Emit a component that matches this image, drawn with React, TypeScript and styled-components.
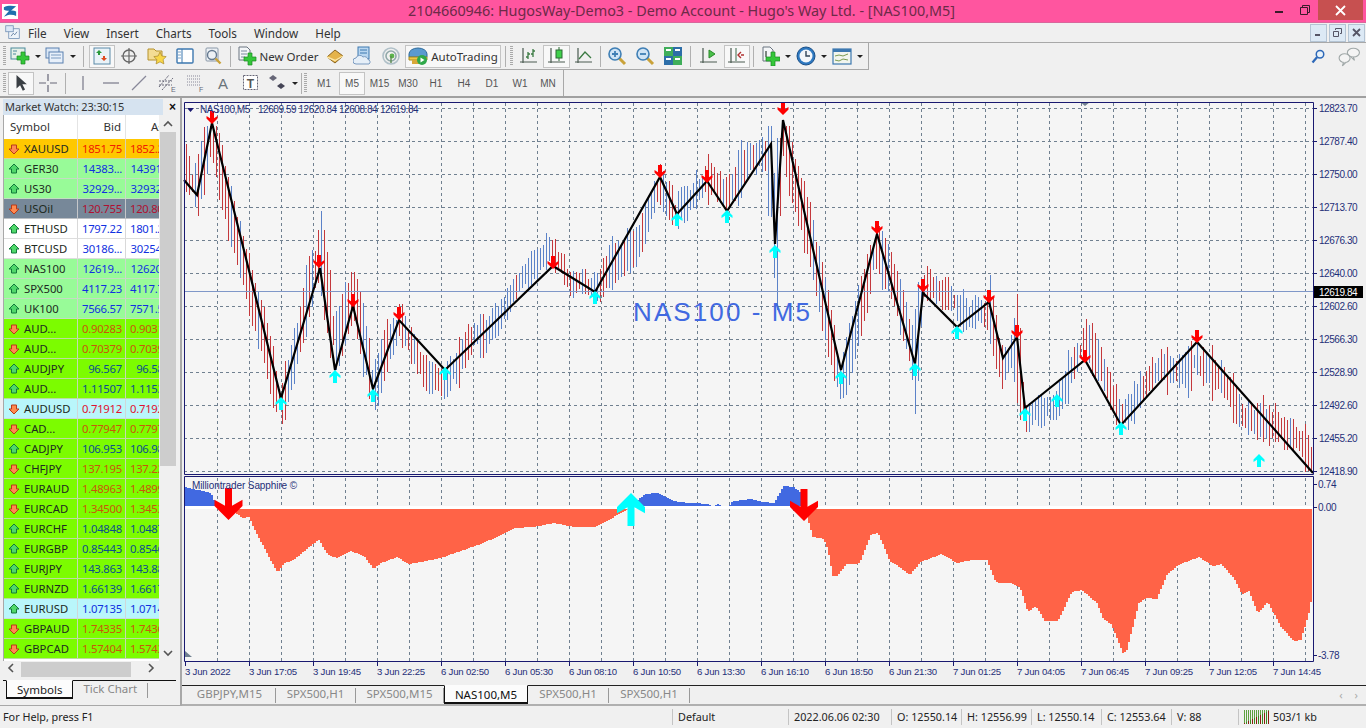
import React, { useMemo } from "react";
import styled, { createGlobalStyle } from "styled-components";

const GlobalStyle = createGlobalStyle`
    html, body { margin: 0; padding: 0; background: #f0f0f0; overflow: hidden; }
    body { font-family: "Liberation Sans", Arial, sans-serif; font-size: 12px; color: #1a1a1a; }
    * { box-sizing: border-box; }
`;

type Pt = [number, number];
type RowKind = "gold" | "pale" | "slate" | "white" | "lawn" | "cyan";

interface Quote {
    symbol: string;
    bid: string;
    ask: string;
    up: boolean;
    kind: RowKind;
}

const QUOTES: Quote[] = [
    { symbol: "XAUUSD", bid: "1851.75", ask: "1852.25", up: false, kind: "gold" },
    { symbol: "GER30", bid: "14383...", ask: "14391...", up: true, kind: "pale" },
    { symbol: "US30", bid: "32929...", ask: "32932...", up: true, kind: "pale" },
    { symbol: "USOil", bid: "120.755", ask: "120.805", up: false, kind: "slate" },
    { symbol: "ETHUSD", bid: "1797.22", ask: "1801.22", up: true, kind: "white" },
    { symbol: "BTCUSD", bid: "30186...", ask: "30254...", up: true, kind: "white" },
    { symbol: "NAS100", bid: "12619...", ask: "12620...", up: true, kind: "pale" },
    { symbol: "SPX500", bid: "4117.23", ask: "4117.73", up: true, kind: "pale" },
    { symbol: "UK100", bid: "7566.57", ask: "7571.57", up: true, kind: "pale" },
    { symbol: "AUD...", bid: "0.90283", ask: "0.90313", up: false, kind: "lawn" },
    { symbol: "AUD...", bid: "0.70379", ask: "0.70399", up: false, kind: "lawn" },
    { symbol: "AUDJPY", bid: "96.567", ask: "96.587", up: true, kind: "lawn" },
    { symbol: "AUD...", bid: "1.11507", ask: "1.11537", up: true, kind: "lawn" },
    { symbol: "AUDUSD", bid: "0.71912", ask: "0.71922", up: false, kind: "cyan" },
    { symbol: "CAD...", bid: "0.77947", ask: "0.77977", up: false, kind: "lawn" },
    { symbol: "CADJPY", bid: "106.953", ask: "106.983", up: true, kind: "lawn" },
    { symbol: "CHFJPY", bid: "137.195", ask: "137.225", up: false, kind: "lawn" },
    { symbol: "EURAUD", bid: "1.48963", ask: "1.48993", up: false, kind: "lawn" },
    { symbol: "EURCAD", bid: "1.34500", ask: "1.34530", up: false, kind: "lawn" },
    { symbol: "EURCHF", bid: "1.04848", ask: "1.04878", up: true, kind: "lawn" },
    { symbol: "EURGBP", bid: "0.85443", ask: "0.85463", up: true, kind: "lawn" },
    { symbol: "EURJPY", bid: "143.863", ask: "143.883", up: true, kind: "lawn" },
    { symbol: "EURNZD", bid: "1.66139", ask: "1.66179", up: true, kind: "lawn" },
    { symbol: "EURUSD", bid: "1.07135", ask: "1.07145", up: true, kind: "cyan" },
    { symbol: "GBPAUD", bid: "1.74335", ask: "1.74365", up: false, kind: "lawn" },
    { symbol: "GBPCAD", bid: "1.57404", ask: "1.57434", up: false, kind: "lawn" },
];

const ROW_BG: Record<RowKind, string> = {
    gold: "#ffc800",
    pale: "#98fb98",
    slate: "#778899",
    white: "#ffffff",
    lawn: "#7cfc00",
    cyan: "#b9f6fb",
};

const quoteColor = (kind: RowKind, up: boolean) => {
    if (kind === "lawn") return up ? "#0b4f8c" : "#c8580a";
    if (kind === "slate") return "#b01030";
    if (kind === "gold") return "#f02000";
    return up ? "#1030e0" : "#e01030";
};

// ---- chart data, read off the picture in page coordinates

const ZIGZAG: Pt[] = [[184, 180], [197, 195], [212, 123], [281, 398], [320, 268], [335, 370], [353, 306], [373, 389], [399, 320], [445, 370], [553, 266], [595, 292], [660, 177], [677, 214], [707, 181], [727, 211], [771, 144], [775, 244], [783, 120], [841, 370], [877, 234], [915, 364], [923, 293], [957, 327], [989, 302], [1003, 358], [1017, 337], [1025, 408], [1085, 360], [1121, 425], [1197, 342], [1313, 473]];

const RED_MARKS: Pt[] = [[212, 117], [319, 261], [353, 300], [399, 313], [553, 262], [660, 171], [707, 176], [783, 108], [877, 227], [923, 285], [989, 296], [1017, 331], [1085, 356], [1197, 336]];
const CYAN_MARKS: Pt[] = [[281, 403], [335, 376], [373, 395], [445, 373], [595, 297], [677, 219], [727, 216], [775, 251], [841, 377], [915, 369], [957, 332], [1025, 414], [1057, 400], [1121, 428], [1259, 460]];

const PRICES: [string, number][] = [["12823.70", 108], ["12787.40", 141], ["12750.00", 174], ["12713.70", 207], ["12676.30", 240], ["12640.00", 273], ["12602.60", 306], ["12566.30", 339], ["12528.90", 372], ["12492.60", 405], ["12455.20", 438], ["12418.90", 471]];

const TIMES = ["3 Jun 2022", "3 Jun 17:05", "3 Jun 19:45", "3 Jun 22:25", "6 Jun 02:50", "6 Jun 05:30", "6 Jun 08:10", "6 Jun 10:50", "6 Jun 13:30", "6 Jun 16:10", "6 Jun 18:50", "6 Jun 21:30", "7 Jun 01:25", "7 Jun 04:05", "7 Jun 06:45", "7 Jun 09:25", "7 Jun 12:05", "7 Jun 14:45"];

const ORANGE_A: Pt[] = [[232, 509], [235, 513], [242, 518], [248, 517], [255, 532], [268, 557], [277, 573], [283, 563], [293, 560], [307, 548], [318, 540], [327, 555], [337, 558], [350, 551], [363, 556], [373, 569], [380, 563], [397, 557], [407, 564], [420, 562], [440, 558], [457, 552], [480, 544], [500, 535], [513, 528], [533, 527], [553, 523], [573, 527], [593, 527], [613, 517], [627, 509]];
const ORANGE_B: Pt[] = [[806, 509], [808, 523], [812, 537], [823, 539], [827, 550], [832, 576], [836, 576], [846, 564], [857, 564], [860, 560], [870, 535], [877, 533], [881, 542], [889, 561], [896, 565], [909, 575], [920, 562], [941, 554], [956, 563], [971, 560], [986, 560], [995, 582], [1001, 583], [1010, 583], [1019, 587], [1027, 612], [1035, 606], [1044, 621], [1057, 621], [1071, 592], [1081, 590], [1096, 603], [1102, 618], [1111, 625], [1122, 653], [1126, 650], [1138, 603], [1145, 598], [1156, 599], [1166, 575], [1177, 565], [1198, 557], [1212, 566], [1220, 564], [1233, 578], [1241, 594], [1248, 591], [1257, 613], [1267, 602], [1280, 627], [1293, 641], [1300, 640], [1308, 613], [1312, 591]];
const BLUE_A: Pt[] = [[185, 487], [197, 490], [210, 493], [215, 505], [217, 506]];
const BLUE_B: Pt[] = [[627, 506], [637, 500], [644, 494], [657, 493], [670, 500], [677, 502], [693, 503], [707, 504], [710, 506], [714, 506], [717, 504], [722, 506], [728, 506], [730, 503], [733, 501], [750, 499], [763, 502], [773, 503], [783, 486], [793, 487], [800, 493], [803, 505], [804, 506]];

const lerp = (pts: Pt[], x: number) => {
    for (let i = 1; i < pts.length; i++) {
        if (x <= pts[i][0]) {
            const [x0, y0] = pts[i - 1];
            const [x1, y1] = pts[i];
            return y0 + ((y1 - y0) * (x - x0)) / (x1 - x0 || 1);
        }
    }
    return pts[pts.length - 1][1];
};

// stepped outline, the histogram in the picture is drawn in 2px columns
const areaPath = (pts: Pt[], base: number) => {
    const start = pts[0][0];
    const end = pts[pts.length - 1][0];
    let d = `M${start} ${base}`;
    for (let x = start; x < end; x += 2) {
        const y = Math.round(lerp(pts, x));
        d += `L${x} ${y}L${x + 2} ${y}`;
    }
    return d + `L${end} ${base}Z`;
};

const makeBars = () => {
    let seed = 41;
    const rnd = () => {
        seed = (seed * 16807) % 2147483647;
        return seed / 2147483647;
    };
    const bars: { x: number; y1: number; y2: number; red: boolean }[] = [];
    let drift = 0;
    for (let x = 186; x < 1312; x += 3) {
        const y = lerp(ZIGZAG, x);
        const slope = lerp(ZIGZAG, x + 6) - y;
        drift = drift * 0.85 + (rnd() - 0.5) * 9;
        // price wanders around the straight zigzag legs
        const wave = 13 * Math.sin(x / 31) + 7 * Math.sin(x / 11);
        const len = 9 + rnd() * 20 + Math.abs(slope) * 1.6 + (rnd() > 0.93 ? 20 : 0);
        const mid = y + drift + wave;
        bars.push({
            x,
            y1: Math.max(126, Math.round(mid - len / 2)),
            y2: Math.min(472, Math.round(mid + len / 2)),
            red: slope > 0 ? rnd() > 0.22 : rnd() > 0.72,
        });
    }
    return bars;
};

const arrowPts = (cx: number, top: number, h: number, w: number, shaft: number, dir: "up" | "down") => {
    const s = dir === "down" ? 1 : -1;
    const y0 = dir === "down" ? top : top + h;
    const tip = y0 + s * h;
    const wing = tip - s * (w * 0.5);
    const back = wing - s * (w * 0.22);
    return [
        [cx - shaft, y0], [cx + shaft, y0], [cx + shaft, back + s * (w * 0.22 - shaft * 0.1)],
        [cx + w / 2, back], [cx + w / 2, wing], [cx, tip], [cx - w / 2, wing], [cx - w / 2, back],
        [cx - shaft, back + s * (w * 0.22 - shaft * 0.1)],
    ].map((p) => p.join(",")).join(" ");
};

// ---- layout

const Shell = styled.div`
    width: 1366px;
    height: 728px;
    display: flex;
    flex-direction: column;
    overflow: hidden;
    background: #f0f0f0;
`;

const TitleBar = styled.div`
    height: 23px;
    flex: none;
    background: #ff559f;
    display: flex;
    align-items: center;
    position: relative;
    border-bottom: 1px solid #d9669c;
`;

const AppLogo = styled.div`
    width: 16px;
    height: 15px;
    margin-left: 2px;
    background: #fff;
    display: flex;
    align-items: center;
    justify-content: center;
`;

const TitleText = styled.div`
    position: absolute;
    left: 408px;
    top: 2px;
    font: 14.4px/18px "Noto Sans", sans-serif;
    color: #6d2a48;
    white-space: nowrap;
`;

const WindowButtons = styled.div`
    margin-left: auto;
    display: flex;
    align-items: flex-start;
    align-self: flex-start;
    padding-right: 3px;
`;

const CaptionButton = styled.div<{ $w: number; $close?: boolean }>`
    width: ${(p) => p.$w}px;
    height: 20px;
    display: flex;
    align-items: center;
    justify-content: center;
    background: ${(p) => (p.$close ? "#c75050" : "transparent")};
`;

const MenuBar = styled.div`
    height: 20px;
    flex: none;
    display: flex;
    align-items: center;
    padding-left: 5px;
    border-bottom: 1px solid #a8a8a8;
`;

const MenuItems = styled.div`
    display: flex;
    gap: 17px;
    margin-left: 8px;
    font: 11.7px "Noto Sans", sans-serif;
    color: #333;
`;

const MdiButtons = styled.div`
    margin-left: auto;
    display: flex;
    gap: 2px;
    padding-right: 1px;
`;

const MdiButton = styled.div`
    width: 17px;
    height: 18px;
    background: #dce9f5;
    border: 1px solid #b4c4d4;
    display: flex;
    align-items: center;
    justify-content: center;
`;

const ToolRow = styled.div<{ $h: number; $line?: boolean }>`
    height: ${(p) => p.$h}px;
    flex: none;
    display: flex;
    border-bottom: ${(p) => (p.$line ? "2px solid #a0a0a0" : "none")};
`;

const ToolBand = styled.div<{ $w: number; $line?: boolean }>`
    width: ${(p) => p.$w}px;
    display: flex;
    align-items: center;
    padding-left: 3px;
    border-right: 1px solid #a8a8a8;
    border-bottom: ${(p) => (p.$line ? "1px solid #a8a8a8" : "none")};
`;

const ToolEnd = styled.div`
    margin-left: auto;
    display: flex;
    align-items: center;
    gap: 12px;
    padding-right: 6px;
`;

const Grip = styled.div`
    width: 3px;
    height: 20px;
    margin-right: 2px;
    flex: none;
    background: repeating-linear-gradient(to bottom, #a9a9a9 0 1px, #f0f0f0 1px 2px);
`;

const ToolSep = styled.div<{ $m?: number }>`
    width: 1px;
    height: 21px;
    flex: none;
    background: #b0b0b0;
    margin: 0 ${(p) => p.$m ?? 5}px;
`;

const ToolBtn = styled.div<{ $w: number; $active?: boolean }>`
    width: ${(p) => p.$w}px;
    height: 23px;
    flex: none;
    display: flex;
    align-items: center;
    justify-content: center;
    gap: 3px;
    font: 11.5px "Noto Sans", sans-serif;
    color: #333;
    background: ${(p) => (p.$active ? "#f8f8f8" : "transparent")};
    border: 1px solid ${(p) => (p.$active ? "#c4c4c4" : "transparent")};
`;

const Period = styled(ToolBtn)`
    font: 10px "Liberation Sans", sans-serif;
    color: #555;
`;

const Caret = styled.span`
    width: 0;
    height: 0;
    margin-left: 2px;
    border-left: 3px solid transparent;
    border-right: 3px solid transparent;
    border-top: 3px solid #222;
`;

const Main = styled.div`
    flex: 1;
    min-height: 0;
    display: flex;
`;

const Watch = styled.div`
    width: 180px;
    flex: none;
    display: flex;
    flex-direction: column;
    padding-left: 3px;
    border-bottom: 1px solid #a8a8a8;
`;

const WatchHead = styled.div`
    height: 17px;
    flex: none;
    display: flex;
    align-items: center;
`;

const WatchTitle = styled.div`
    width: 160px;
    height: 16px;
    padding-left: 2px;
    background: #d6e3f0;
    font: 11px/15px "Noto Sans", sans-serif;
    letter-spacing: -0.1px;
    color: #333;
    white-space: nowrap;
`;

const WatchClose = styled.div`
    margin-left: 6px;
    font: bold 12px "Liberation Sans", sans-serif;
    color: #111;
`;

const WatchBody = styled.div`
    height: 546px;
    flex: none;
    display: flex;
`;

const Table = styled.div`
    width: 156px;
    overflow: hidden;
    flex: none;
    border-left: 1px solid #a8a8a8;
    background: #fff;
`;

const cols = "74px 48px 48px";

const HeadRow = styled.div`
    height: 24px;
    display: grid;
    grid-template-columns: ${cols};
    width: 170px;
    background: #fff;
    font: 11.5px/23px "Noto Sans", sans-serif;
    color: #333;
`;

const HeadCell = styled.div<{ $right?: number }>`
    padding: ${(p) => (p.$right ? `0 ${p.$right}px 0 0` : "0 0 0 6px")};
    text-align: ${(p) => (p.$right ? "right" : "left")};
    border-right: 1px solid #e4e4e4;
`;

const Row = styled.div<{ $kind: RowKind }>`
    height: 20px;
    width: 170px;
    display: grid;
    grid-template-columns: ${cols};
    background: ${(p) => ROW_BG[p.$kind]};
    border-bottom: 1px solid rgba(210, 210, 210, 0.75);
    font: 11.3px/19px "Noto Sans", sans-serif;
    color: #1d2a22;
`;

const SymbolCell = styled.div`
    display: flex;
    align-items: center;
    gap: 4px;
    padding-left: 3px;
    border-right: 1px solid rgba(210, 210, 210, 0.85);
    white-space: nowrap;
`;

const PriceCell = styled.div<{ $color: string }>`
    padding-right: 3px;
    text-align: right;
    white-space: nowrap;
    overflow: hidden;
    letter-spacing: -0.25px;
    color: ${(p) => p.$color};
    border-right: 1px solid rgba(210, 210, 210, 0.85);
`;

const VScroll = styled.div`
    width: 17px;
    flex: none;
    display: flex;
    flex-direction: column;
    align-items: center;
    background: #f0f0f0;
    margin-right: 4px;
`;

const ScrollThumb = styled.div<{ $h: number }>`
    width: 16px;
    height: ${(p) => p.$h}px;
    background: #cdcdcd;
    flex: none;
`;

const ScrollGap = styled.div`
    flex: 1;
`;

const ScrollArrow = styled.div<{ $s: number; $ml?: number }>`
    width: ${(p) => p.$s}px;
    height: ${(p) => p.$s}px;
    margin-left: ${(p) => p.$ml ?? 0}px;
    flex: none;
    display: flex;
    align-items: center;
    justify-content: center;
`;

const HScroll = styled.div`
    height: 19px;
    flex: none;
    display: flex;
    align-items: flex-start;
    padding: 1px 0 0 2px;
`;

const HThumb = styled.div`
    width: 110px;
    height: 15px;
    margin: 0 6px 0 4px;
    background: #cdcdcd;
`;

const WatchTabs = styled.div`
    height: 24px;
    margin-right: 4px;
    padding-left: 3px;
    flex: none;
    display: flex;
    border-top: 1px solid #111;
    font: 11.5px/18px "Noto Sans", sans-serif;
`;

const WatchTab = styled.div<{ $active?: boolean }>`
    height: 19px;
    margin-top: -1px;
    padding: 0 10px;
    color: ${(p) => (p.$active ? "#222" : "#888")};
    background: ${(p) => (p.$active ? "#fcfcfc" : "transparent")};
    border: ${(p) => (p.$active ? "1px solid #111" : "none")};
    border-top: ${(p) => (p.$active ? "1px solid #fcfcfc" : "none")};
    border-bottom-width: 2px;
    display: flex;
`;

const TabBar = styled.div`
    height: 21px;
    flex: none;
    display: flex;
    align-items: stretch;
    padding-left: 2px;
    border-top: 1px solid #222;
    border-bottom: 2px solid #b0b0b0;
    font: 11.5px/18px "Noto Sans", sans-serif;
`;

const Tab = styled.div<{ $active?: boolean; $w: number }>`
    width: ${(p) => p.$w}px;
    margin-top: -1px;
    text-align: center;
    color: ${(p) => (p.$active ? "#111" : "#888")};
    background: ${(p) => (p.$active ? "#fcfcfc" : "transparent")};
    border: ${(p) => (p.$active ? "1px solid #111" : "none")};
    border-top: ${(p) => (p.$active ? "1px solid #fcfcfc" : "none")};
    border-bottom-width: 2px;
    position: relative;
`;

const TabDivider = styled.div`
    width: 1px;
    height: 15px;
    margin-top: 2px;
    background: #999;
    flex: none;
`;

const TabNav = styled.div`
    margin-left: auto;
    padding-right: 8px;
    display: flex;
    align-items: center;
    gap: 12px;
    color: #aaa;
    font-size: 11px;
`;

const ChartPane = styled.div`
    flex: 1;
    min-width: 0;
    display: flex;
    flex-direction: column;
    border-left: 2px solid #a8a8a8;
`;

const ChartCanvas = styled.svg`
    display: block;
    flex: 1;
    min-height: 0;
    width: 100%;
    background: #f0f0f0;
    font-family: "Liberation Sans", Arial, sans-serif;
`;

const StatusBar = styled.div`
    height: 22px;
    flex: none;
    display: flex;
    align-items: center;
    font: 10.8px "Noto Sans", sans-serif;
    color: #222;
    white-space: nowrap;
`;

const StatusCell = styled.div<{ $w: number }>`
    width: ${(p) => p.$w}px;
    flex: none;
    height: 16px;
    line-height: 16px;
    padding-left: 5px;
    display: flex;
    align-items: center;
    gap: 3px;
    border-left: 1px solid #c4c4c4;
    overflow: hidden;
    &:first-child { border-left: none; padding-left: 3px; }
`;

// ---- icons

const Ic: React.FC<{ s?: number; children: React.ReactNode }> = ({ s = 20, children }) => (
    <svg width={s} height={s} viewBox="0 0 20 20" style={{ display: "block", flex: "none" }}>{children}</svg>
);

const GreenPlus: React.FC<{ x: number; y: number; r?: number }> = ({ x, y, r = 5 }) => (
    <path d={`M${x - 2} ${y - r}h4v${r - 2}h${r - 2}v4h-${r - 2}v${r - 2}h-4v-${r - 2}h-${r - 2}v-4h${r - 2}z`} fill="#35c73a" stroke="#1a8a24" strokeWidth=".7" />
);

const Axes: React.FC = () => <path d="M4 2v15M1 16h17" stroke="#4a5a50" strokeWidth="1.2" fill="none" />;

const Lens: React.FC<{ minus?: boolean }> = ({ minus }) => (
    <>
        <path d="M12 12l6 6" stroke="#c9a23a" strokeWidth="3" />
        <circle cx="8" cy="8" r="6" fill="#cfe4f5" stroke="#3f7fb5" strokeWidth="1.6" />
        <path d={minus ? "M5 8h6" : "M5 8h6M8 5v6"} stroke="#3f7fb5" strokeWidth="1.8" />
    </>
);

const ICONS: Record<string, React.ReactNode> = {
    newChart: <><rect x="1" y="2" width="14" height="11" fill="#e6f0e8" stroke="#4a8a9a" /><path d="M3 5h4M3 8h3" stroke="#4a8a9a" /><GreenPlus x={13} y={12} r={6} /></>,
    profiles: <><rect x="1" y="2" width="13" height="10" fill="#dce8f6" stroke="#5a80b0" /><rect x="4" y="6" width="14" height="11" fill="#e8f0fa" stroke="#5a80b0" /><path d="M6 9h10M6 12h10" stroke="#7a9ac0" /></>,
    watch: <><rect x="2" y="2" width="16" height="16" fill="#eaf3f8" stroke="#5a8aa8" /><path d="M7 4l3 3H8v2H6V7H4z" fill="#2a9a3a" /><path d="M12 15l-3-3h2v-2h2v2h2z" fill="#e04a20" /></>,
    navigator: <><circle cx="10" cy="10" r="6" fill="none" stroke="#666" strokeWidth="1.4" /><path d="M10 2v16M2 10h16" stroke="#666" strokeWidth="1.2" /></>,
    folder: <><path d="M1 3h6l2 2h6v9H1z" fill="#f3dc94" stroke="#b6922c" /><path d="M13 6l1.900 4 4.300.6-3.100 3 .8 4.300-3.900-2.100-3.900 2.100.8-4.300-3.100-3 4.300-.6z" fill="#f8d648" stroke="#a8862a" strokeWidth=".7" /></>,
    terminal: <><rect x="2" y="3" width="16" height="14" rx="1" fill="#fff" stroke="#3d78b0" strokeWidth="1.4" /><path d="M7 3v14" stroke="#3d78b0" /><path d="M3 6h3M3 9h3M3 12h3" stroke="#7aa3c8" /></>,
    tester: <><rect x="3" y="2" width="12" height="13" rx="1" fill="#edf1f5" stroke="#8a98a8" /><circle cx="9" cy="9" r="4.5" fill="none" stroke="#667a90" strokeWidth="1.4" /><path d="M12.500 12.500l5 5" stroke="#c9a23a" strokeWidth="2.400" /></>,
    newOrder: <><path d="M2 1h8l3 3v10H2z" fill="#f4f6f8" stroke="#6a7480" /><path d="M4 5h6M4 8h6M4 11h4" stroke="#7a8aa0" /><GreenPlus x={13} y={13} r={6} /></>,
    book: <><path d="M2 11L10 4l8 6-8 7z" fill="#e5b34a" stroke="#8a6420" /><path d="M2 11l8 3.500L18 10" fill="none" stroke="#fbe7a8" strokeWidth="1.400" /></>,
    cloud: <><rect x="5" y="1" width="11" height="12" fill="#b9d6f0" stroke="#3d78b0" /><path d="M7 4h7M7 7h7" stroke="#3d78b0" /><path d="M3 18a3 3 0 010-6 4 4 0 017-1 3.500 3.500 0 015 2.500 2.500 2.500 0 011 4.500z" fill="#e6eff8" stroke="#7a9ac0" /></>,
    radio: <><circle cx="10" cy="10" r="8" fill="none" stroke="#b0c0c8" strokeWidth="1.600" /><circle cx="10" cy="10" r="5" fill="none" stroke="#90a8a8" strokeWidth="1.600" /><circle cx="11" cy="10" r="2.400" fill="#5ab34a" /><path d="M10 10v7" stroke="#5a8a50" strokeWidth="1.400" /></>,
    auto: <><path d="M1 8a9 6 0 0118 0v3H1z" fill="#5a9ad0" stroke="#2d6a9a" /><path d="M1 11h18v3H1z" fill="#f0c848" stroke="#a88a20" /><path d="M4 14h10v4H4z" fill="#d8a838" /><circle cx="14" cy="14" r="5" fill="#2fa84a" /><path d="M12.500 11.500l4 2.500-4 2.500z" fill="#fff" /></>,
    bars: <><Axes /><path d="M9 6v7M7 11h2M9 8h2M14 3v8M12 8h2M14 5h2" stroke="#3a7a42" strokeWidth="1.300" fill="none" /></>,
    candles: <><Axes /><path d="M12 1v14" stroke="#2a6a32" /><rect x="9" y="4" width="6" height="8" fill="#3fd04a" stroke="#2a6a32" /></>,
    line: <><Axes /><path d="M5 13l6-7 6 6" stroke="#3a7a42" strokeWidth="1.300" fill="none" /></>,
    zoomIn: <Lens />,
    zoomOut: <Lens minus />,
    tile: <><rect x="1" y="1" width="9" height="9" fill="#3fae5a" /><rect x="10" y="1" width="9" height="9" fill="#2d6ea8" /><rect x="1" y="10" width="9" height="9" fill="#2d6ea8" /><rect x="10" y="10" width="9" height="9" fill="#3fae5a" /><path d="M3 4h5M12 4h5M3 13h5M12 13h5" stroke="#fff" strokeWidth="2" /></>,
    shift: <><Axes /><path d="M10 4l6 4-6 4z" fill="#4ac04a" stroke="#2a8a2a" /></>,
    scroll: <><Axes /><path d="M9 2v13" stroke="#3a6a4a" /><path d="M17 9h-3M14 6l-3 3 3 3" stroke="#b03030" strokeWidth="1.400" fill="none" /></>,
    indicator: <><path d="M3 1h7l3 3v11H3z" fill="#f4f6f8" stroke="#6a7480" /><path d="M6 5v6" stroke="#4a5a50" strokeWidth="1.400" /><GreenPlus x={13} y={13} r={7} /></>,
    clock: <><circle cx="10" cy="10" r="9" fill="#2d78c0" stroke="#1a4f88" /><circle cx="10" cy="10" r="6.500" fill="#f2f6fa" /><path d="M10 5v5h4" stroke="#33465a" strokeWidth="1.400" fill="none" /></>,
    template: <><rect x="1" y="3" width="18" height="15" fill="#f2f5ee" stroke="#3d78b0" strokeWidth="1.200" /><rect x="1" y="3" width="18" height="3" fill="#3d78b0" /><path d="M3 10l4-1 4 1 5-2M3 14l4 1 4-2 5 1" stroke="#7a9a50" fill="none" /></>,
    cursor: <path d="M5 1v15l4-3.500 3 6 2.500-1.200-3-6h5z" fill="#3a3f44" />,
    cross: <path d="M10 1v7M10 12v7M1 10h7M12 10h7" stroke="#667" strokeWidth="1.200" />,
    vline: <path d="M10 3v14" stroke="#778" strokeWidth="1.200" />,
    hline: <path d="M2 10h16" stroke="#778" strokeWidth="1.200" />,
    trend: <path d="M3 17L17 3" stroke="#889" strokeWidth="1.200" />,
    fibE: <><path d="M2 14L12 2M5 17L16 5M2 8h13M2 12h13" stroke="#667" strokeDasharray="2 1" fill="none" /><text x="14" y="19" fontSize="7" fill="#667" fontFamily="Liberation Sans">E</text></>,
    fibF: <><path d="M2 3h13M2 6h13M2 9h13M2 12h13" stroke="#889" strokeDasharray="1 1" fill="none" /><text x="14" y="19" fontSize="7" fill="#667" fontFamily="Liberation Sans">F</text></>,
    letterA: <text x="10" y="16" fontSize="15" fill="#6a747a" textAnchor="middle" fontFamily="Liberation Sans">A</text>,
    letterT: <><rect x="2.500" y="2.500" width="14" height="14" fill="#fff" stroke="#667" strokeDasharray="2 1" /><text x="9.500" y="14.500" fontSize="12" fill="#555" textAnchor="middle" fontFamily="Liberation Sans" fontWeight="bold">T</text></>,
    arrows: <><path d="M2 5l4-3 4 3-4 3z" fill="#667" /><path d="M10 13l4-3 4 3-4 3z" fill="#445" /></>,
    search: <><circle cx="12" cy="7" r="5" fill="#e8f2fa" stroke="#2d68b8" strokeWidth="2" /><path d="M8 11l-6 7" stroke="#2d68b8" strokeWidth="3" /></>,
    chat: <><ellipse cx="14" cy="6" rx="5.500" ry="4" fill="#f4f4f4" stroke="#a0a8a8" /><path d="M14 10l1 3-3-3" fill="#f4f4f4" stroke="#a0a8a8" /><ellipse cx="6" cy="11" rx="5" ry="4" fill="#f4f4f4" stroke="#a0a8a8" /><path d="M5 15l-1 3 3-3" fill="#f4f4f4" stroke="#a0a8a8" /></>,
    menuDoc: <><rect x="5" y="5" width="14" height="13" fill="#eef4fa" stroke="#6a8ab0" /><rect x="1" y="1" width="10" height="8" fill="#dce8f6" stroke="#6a8ab0" /><path d="M8 15l3-4 2 2 3-4" stroke="#4a6a90" fill="none" /></>,
};

const Icon: React.FC<{ name: string; s?: number }> = ({ name, s }) => <Ic s={s}>{ICONS[name]}</Ic>;

const ArrowSvg = styled.svg`
    flex: none;
    margin-left: 1px;
`;

const RowArrow: React.FC<{ up: boolean }> = ({ up }) => (
    <ArrowSvg width="12" height="12" viewBox="0 0 12 12">
        {up
            ? <path d="M6 1l5 5H8.500v4h-5V6H1z" fill="#4fd86a" stroke="#127a3a" />
            : <path d="M6 11L1 6h2.500V2h5v4H11z" fill="#ff8a50" stroke="#b83a18" />}
    </ArrowSvg>
);

const Chevron: React.FC<{ dir: "up" | "down" | "left" | "right" }> = ({ dir }) => {
    const d = { up: "M2 8l4-4 4 4", down: "M2 4l4 4 4-4", left: "M8 2L4 6l4 4", right: "M4 2l4 4-4 4" }[dir];
    return <svg width="12" height="12" viewBox="0 0 12 12"><path d={d} fill="none" stroke="#555" strokeWidth="1.600" /></svg>;
};

const Tool: React.FC<{ name: string; w?: number; active?: boolean; caret?: boolean; s?: number }> = ({ name, w = 28, active, caret, s }) => (
    <ToolBtn $w={w} $active={active}>
        <Icon name={name} s={s} />
        {caret && <Caret />}
    </ToolBtn>
);

const PriceChart: React.FC = () => {
    const bars = useMemo(makeBars, []);
    const gridX = Array.from({ length: 35 }, (_, i) => 217 + i * 32);
    const zig = ZIGZAG.map((p) => p.join(",")).join(" ");
    return (
        <ChartCanvas viewBox="182 98 1184 587" preserveAspectRatio="none">
            <rect x="184" y="102" width="1129" height="372" fill="#f5f5f5" />
            <rect x="184" y="477" width="1129" height="185" fill="#f5f5f5" />

            {PRICES.map(([, y]) => (
                <line key={y} x1="184" x2="1313" y1={y + 0.5} y2={y + 0.5} stroke="#708090" strokeDasharray="3 3" />
            ))}
            {gridX.map((x) => (
                <g key={x} stroke="#708090" strokeDasharray="3 3">
                    <line x1={x + 0.5} x2={x + 0.5} y1="103" y2="474" />
                    <line x1={x + 0.5} x2={x + 0.5} y1="478" y2="661" />
                </g>
            ))}

            {bars.map((b) => (
                <line key={b.x} x1={b.x + 0.5} x2={b.x + 0.5} y1={b.y1} y2={b.y2} stroke={b.red ? "#c4383c" : "#5b82c8"} />
            ))}

            <line x1="184" x2="1313" y1="291.500" y2="291.500" stroke="#7f97c8" />

            <polyline points={zig} fill="none" stroke="#000" strokeWidth="2.200" strokeLinejoin="miter" />

            {RED_MARKS.map(([x, y]) => (
                <polygon key={x} points={arrowPts(x, y - 6, 13, 11, 2, "down")} fill="#ff0000" />
            ))}
            {CYAN_MARKS.map(([x, y]) => (
                <polygon key={x} points={arrowPts(x, y - 6, 13, 11, 2, "up")} fill="#00ffff" />
            ))}

            <text x="633" y="321" fontSize="26" letterSpacing="2.100" fill="#4169e1">NAS100 - M5</text>

            <path d="M187 108h7l-3.500 4z" fill="#191970" />
            <text y="113" fontSize="10" letterSpacing="-0.45" fill="#1f2f78">
                <tspan x="200">NAS100,M5</tspan>
                <tspan x="258">12609.59</tspan>
                <tspan x="298.500">12620.84</tspan>
                <tspan x="339">12608.84</tspan>
                <tspan x="380">12619.84</tspan>
            </text>
            <path d="M1080 102h10l-5 4z" fill="#708090" />

            <line x1="184" x2="1313" y1="507.500" y2="507.500" stroke="#fff" strokeWidth="3" />
            <path d={areaPath(BLUE_A, 506)} fill="#4169e1" />
            <path d={areaPath(BLUE_B, 506)} fill="#4169e1" />
            <path d={areaPath(ORANGE_A, 509)} fill="#ff6347" />
            <path d={areaPath(ORANGE_B, 509)} fill="#ff6347" />

            <polygon points={arrowPts(228.500, 488, 32, 28, 3.500, "down")} fill="#ff0000" />
            <polygon points={arrowPts(804, 489, 32, 28, 3.500, "down")} fill="#ff0000" />
            <polygon points={arrowPts(631, 493, 33, 28, 3.500, "up")} fill="#00ffff" />

            <text x="192" y="489" fontSize="10" letterSpacing="-0.1" fill="#1f2f78">Milliontrader Sapphire ©</text>
            <path d="M185 651v6h7z" fill="#708090" />

            <g stroke="#191970" fill="none">
                <path d="M184.500 102.500H1313.500V474.500H184.500Z" />
                <path d="M184.500 476.500H1313.500V661.500H184.500Z" />
            </g>

            <g fontSize="10" fill="#1f2f78">
                {PRICES.map(([p, y]) => (
                    <g key={p}>
                        <line x1="1313" x2="1317" y1={y + 0.5} y2={y + 0.5} stroke="#191970" />
                        <text x="1319" y={y + 4} letterSpacing="-0.45">{p}</text>
                    </g>
                ))}
                {[["0.74", 484], ["0.00", 507], ["-3.78", 655]].map(([t, y]) => (
                    <g key={t as string}>
                        <line x1="1313" x2="1317" y1={(y as number) + 0.5} y2={(y as number) + 0.5} stroke="#191970" />
                        <text x="1318" y={(y as number) + 4} letterSpacing="-0.3">{t}</text>
                    </g>
                ))}
                {TIMES.map((t, i) => (
                    <g key={t}>
                        <line x1={185.500 + i * 64} x2={185.500 + i * 64} y1="662" y2="666" stroke="#191970" />
                        <text x={185 + i * 64} y="675" fontSize="9.600" letterSpacing="-0.2">{t}</text>
                    </g>
                ))}
            </g>

            <rect x="1314" y="286" width="49" height="12" fill="#000" />
            <text x="1319" y="296" fontSize="10" letterSpacing="-0.45" fill="#fff">12619.84</text>
        </ChartCanvas>
    );
};

const App: React.FC = () => {
    return (
        <Shell>
            <GlobalStyle />
            <TitleBar>
                <AppLogo>
                    <svg width="14" height="13" viewBox="0 0 16 14">
                        <path d="M1 2c4-2 9-2 14-1L9 6c2-.5 4 0 6 1v5c-4-2-9-2-14 1l6-7C5 6.500 3 6 1 5z" fill="#1f6fae" />
                    </svg>
                </AppLogo>
                <TitleText>2104660946: HugosWay-Demo3 - Demo Account - Hugo's Way Ltd. - [NAS100,M5]</TitleText>
                <WindowButtons>
                    <CaptionButton $w={26}>
                        <svg width="10" height="10" viewBox="0 0 10 10"><path d="M1 7h8" stroke="#3a1a2a" strokeWidth="2" /></svg>
                    </CaptionButton>
                    <CaptionButton $w={26}>
                        <svg width="12" height="12" viewBox="0 0 12 12"><path d="M1.500 3.500h7v7h-7zM3.500 3V1.500h7v7H9" fill="none" stroke="#3a1a2a" /></svg>
                    </CaptionButton>
                    <CaptionButton $w={45} $close>
                        <svg width="11" height="11" viewBox="0 0 11 11"><path d="M1 1l9 9M10 1l-9 9" stroke="#fff" strokeWidth="1.800" /></svg>
                    </CaptionButton>
                </WindowButtons>
            </TitleBar>

            <MenuBar>
                <Icon name="menuDoc" s={15} />
                <MenuItems>
                    <span>File</span>
                    <span>View</span>
                    <span>Insert</span>
                    <span>Charts</span>
                    <span>Tools</span>
                    <span>Window</span>
                    <span>Help</span>
                </MenuItems>
                <MdiButtons>
                    <MdiButton><svg width="9" height="9" viewBox="0 0 9 9"><path d="M1 7h5" stroke="#556" strokeWidth="2" /></svg></MdiButton>
                    <MdiButton><svg width="9" height="9" viewBox="0 0 9 9"><path d="M.5 3.500h5v5h-5zM2.500 2V.5h6v5H7" fill="none" stroke="#556" /></svg></MdiButton>
                    <MdiButton><svg width="9" height="9" viewBox="0 0 9 9"><path d="M1 1l7 7M8 1L1 8" stroke="#556" strokeWidth="1.800" /></svg></MdiButton>
                </MdiButtons>
            </MenuBar>

            <ToolRow $h={27}>
                <ToolBand $w={869} $line>
                    <Grip />
                    <Tool name="newChart" w={35} caret />
                    <Tool name="profiles" w={35} caret />
                    <ToolSep />
                    <Tool name="watch" w={26} active />
                    <Tool name="navigator" />
                    <Tool name="folder" />
                    <Tool name="terminal" />
                    <Tool name="tester" />
                    <ToolSep $m={3} />
                    <ToolBtn $w={87}>
                        <Icon name="newOrder" />
                        New Order
                    </ToolBtn>
                    <Tool name="book" />
                    <Tool name="cloud" />
                    <Tool name="radio" />
                    <ToolBtn $w={96} $active>
                        <Icon name="auto" />
                        AutoTrading
                    </ToolBtn>
                    <ToolSep $m={4} />
                    <Grip />
                    <Tool name="bars" w={28} />
                    <Tool name="candles" w={27} active />
                    <Tool name="line" w={28} />
                    <ToolSep $m={2} />
                    <Tool name="zoomIn" />
                    <Tool name="zoomOut" />
                    <Tool name="tile" />
                    <ToolSep $m={3} />
                    <Tool name="shift" w={30} />
                    <Tool name="scroll" w={26} active />
                    <ToolSep $m={3} />
                    <Tool name="indicator" w={36} caret />
                    <Tool name="clock" w={36} caret />
                    <Tool name="template" w={36} caret />
                </ToolBand>
                <ToolEnd>
                    <Icon name="search" s={15} />
                    <Icon name="chat" s={22} />
                </ToolEnd>
            </ToolRow>

            <ToolRow $h={28} $line>
                <ToolBand $w={564}>
                    <Grip />
                    <Tool name="cursor" w={26} active s={18} />
                    <Tool name="cross" />
                    <ToolSep $m={3} />
                    <Tool name="vline" />
                    <Tool name="hline" />
                    <Tool name="trend" />
                    <Tool name="fibE" />
                    <Tool name="fibF" />
                    <Tool name="letterA" />
                    <Tool name="letterT" />
                    <Tool name="arrows" w={34} caret />
                    <ToolSep $m={2} />
                    <Grip />
                    <Period $w={30}>M1</Period>
                    <Period $w={26} $active>M5</Period>
                    <Period $w={29}>M15</Period>
                    <Period $w={28}>M30</Period>
                    <Period $w={28}>H1</Period>
                    <Period $w={28}>H4</Period>
                    <Period $w={28}>D1</Period>
                    <Period $w={28}>W1</Period>
                    <Period $w={28}>MN</Period>
                </ToolBand>
            </ToolRow>

            <Main>
                <Watch>
                    <WatchHead>
                        <WatchTitle>Market Watch: 23:30:15</WatchTitle>
                        <WatchClose>×</WatchClose>
                    </WatchHead>
                    <WatchBody>
                        <Table>
                            <HeadRow>
                                <HeadCell>Symbol</HeadCell>
                                <HeadCell $right={4}>Bid</HeadCell>
                                <HeadCell $right={3}>Ask</HeadCell>
                            </HeadRow>
                            {QUOTES.map((q, i) => (
                                <Row key={i} $kind={q.kind}>
                                    <SymbolCell>
                                        <RowArrow up={q.up} />
                                        {q.symbol}
                                    </SymbolCell>
                                    <PriceCell $color={quoteColor(q.kind, q.up)}>{q.bid}</PriceCell>
                                    <PriceCell $color={quoteColor(q.kind, q.up)}>{q.ask}</PriceCell>
                                </Row>
                            ))}
                        </Table>
                        <VScroll>
                            <ScrollArrow $s={17}><Chevron dir="up" /></ScrollArrow>
                            <ScrollThumb $h={334} />
                            <ScrollGap />
                            <ScrollArrow $s={17}><Chevron dir="down" /></ScrollArrow>
                        </VScroll>
                    </WatchBody>
                    <HScroll>
                        <ScrollArrow $s={12}><Chevron dir="left" /></ScrollArrow>
                        <HThumb />
                        <ScrollArrow $s={12} $ml={8}><Chevron dir="right" /></ScrollArrow>
                    </HScroll>
                    <WatchTabs>
                        <WatchTab $active>Symbols</WatchTab>
                        <WatchTab>Tick Chart</WatchTab>
                        <TabDivider />
                    </WatchTabs>
                </Watch>

                <ChartPane>
                    <PriceChart />
                    <TabBar>
                        <Tab $w={91}>GBPJPY,M15</Tab>
                        <TabDivider />
                        <Tab $w={79}>SPX500,H1</Tab>
                        <TabDivider />
                        <Tab $w={87}>SPX500,M15</Tab>
                        <TabDivider />
                        <Tab $w={84} $active>NAS100,M5</Tab>
                        <Tab $w={80}>SPX500,H1</Tab>
                        <TabDivider />
                        <Tab $w={80}>SPX500,H1</Tab>
                        <TabDivider />
                        <TabNav>
                            <span>‹</span>
                            <span>›</span>
                        </TabNav>
                    </TabBar>
                </ChartPane>
            </Main>

            <StatusBar>
                <StatusCell $w={672}>For Help, press F1</StatusCell>
                <StatusCell $w={116}>Default</StatusCell>
                <StatusCell $w={103}>2022.06.06 02:30</StatusCell>
                <StatusCell $w={70}>O: 12550.14</StatusCell>
                <StatusCell $w={70}>H: 12556.99</StatusCell>
                <StatusCell $w={70}>L: 12550.14</StatusCell>
                <StatusCell $w={70}>C: 12553.64</StatusCell>
                <StatusCell $w={67}>V: 88</StatusCell>
                <StatusCell $w={128}>
                    <svg width="26" height="14" viewBox="0 0 26 14">
                        {Array.from({ length: 13 }, (_, i) => (
                            <rect key={i} x={i * 2} y={13 - i} width="1" height={i + 1} fill={i % 2 ? "#3a8a20" : "#8a2010"} />
                        ))}
                        {Array.from({ length: 13 }, (_, i) => (
                            <rect key={i} x={i * 2} y="0" width="1" height={13 - i} fill="#5fa040" />
                        ))}
                    </svg>
                    503/1 kb
                </StatusCell>
            </StatusBar>
        </Shell>
    );
};

export default App;
